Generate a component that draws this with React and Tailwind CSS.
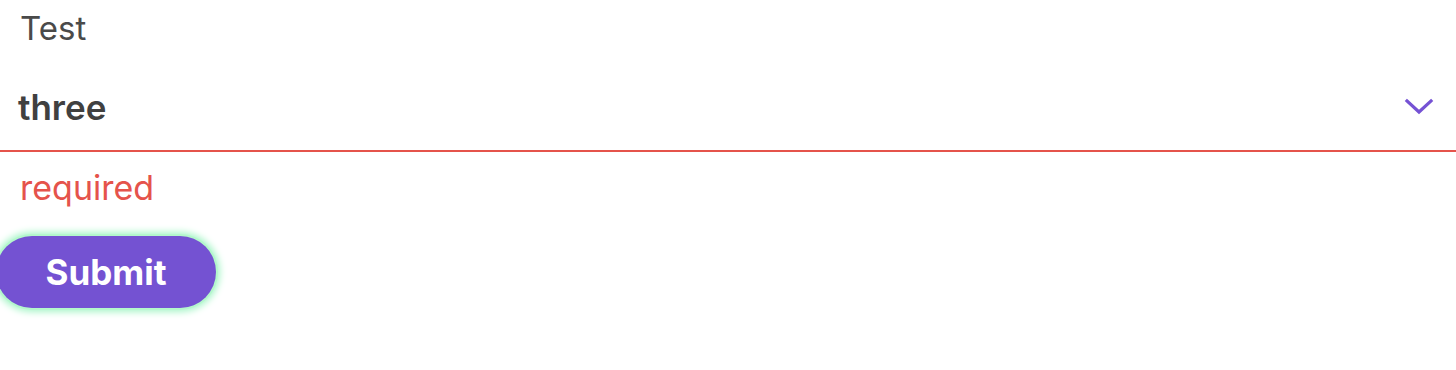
export default function App() {
  return (
    <div className="w-[1456px] h-[370px] bg-white" style={{ fontFamily: 'Inter, "Noto Sans", sans-serif' }}>
      <div className="pl-[20px] pt-[8px] text-[33px] leading-[40px] text-[#4a4a4a]">Test</div>
      <div className="flex items-center justify-between h-[104px] pt-[16px] border-b-2 border-[#e5534b] pl-[18px] pr-[22px]">
        <span className="text-[35px] font-semibold text-[#404040]">three</span>
        <svg width="30" height="18" viewBox="0 0 30 18" fill="none" stroke="#7552d4" strokeWidth="3.2" strokeLinecap="square">
          <polyline points="3,3 15,14 27,3" />
        </svg>
      </div>
      <div className="pl-[20px] pt-[16px] text-[34px] leading-[40px] text-[#e5534b]">required</div>
      <div className="pt-[28px]">
        <button className="-ml-[4px] h-[72px] w-[220px] rounded-full bg-[#7452d2] text-white text-[35px] font-bold shadow-[0_0_0_2px_#b4f7cc,0_0_7px_4px_#a8f5c8]">
          Submit
        </button>
      </div>
    </div>
  )
}
